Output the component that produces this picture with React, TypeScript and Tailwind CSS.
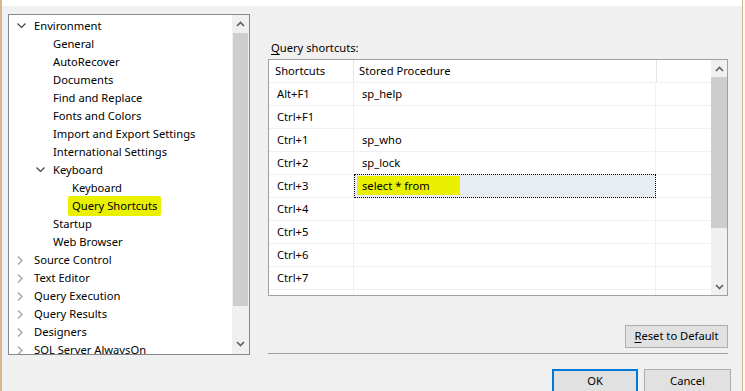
import React from "react"

const font = { fontFamily: '"Noto Sans", "Segoe UI", sans-serif' }

type Node = { label: string; level: number; chevron?: "open" | "closed"; mark?: boolean }

const tree: Node[] = [
  { label: "Environment", level: 0, chevron: "open" },
  { label: "General", level: 1 },
  { label: "AutoRecover", level: 1 },
  { label: "Documents", level: 1 },
  { label: "Find and Replace", level: 1 },
  { label: "Fonts and Colors", level: 1 },
  { label: "Import and Export Settings", level: 1 },
  { label: "International Settings", level: 1 },
  { label: "Keyboard", level: 1, chevron: "open" },
  { label: "Keyboard", level: 2 },
  { label: "Query Shortcuts", level: 2, mark: true },
  { label: "Startup", level: 1 },
  { label: "Web Browser", level: 1 },
  { label: "Source Control", level: 0, chevron: "closed" },
  { label: "Text Editor", level: 0, chevron: "closed" },
  { label: "Query Execution", level: 0, chevron: "closed" },
  { label: "Query Results", level: 0, chevron: "closed" },
  { label: "Designers", level: 0, chevron: "closed" },
  { label: "SQL Server AlwaysOn", level: 0, chevron: "closed" },
]

const rows: [string, string][] = [
  ["Alt+F1", "sp_help"],
  ["Ctrl+F1", ""],
  ["Ctrl+1", "sp_who"],
  ["Ctrl+2", "sp_lock"],
  ["Ctrl+3", "select * from"],
  ["Ctrl+4", ""],
  ["Ctrl+5", ""],
  ["Ctrl+6", ""],
  ["Ctrl+7", ""],
  ["", ""],
]

function ArrowUp() {
  return (
    <svg width="9" height="6" viewBox="0 0 9 6">
      <polyline points="1,5 4.5,1.5 8,5" fill="none" stroke="#606060" strokeWidth="1.6" />
    </svg>
  )
}

function ArrowDown() {
  return (
    <svg width="9" height="6" viewBox="0 0 9 6">
      <polyline points="1,1 4.5,4.5 8,1" fill="none" stroke="#606060" strokeWidth="1.6" />
    </svg>
  )
}

function Chevron({ kind }: { kind: "open" | "closed" }) {
  if (kind === "open")
    return (
      <svg width="9" height="6" viewBox="0 0 9 6">
        <polyline points="0.5,0.5 4.5,4.5 8.5,0.5" fill="none" stroke="#404040" strokeWidth="1.2" />
      </svg>
    )
  return (
    <svg width="6" height="9" viewBox="0 0 6 9">
      <polyline points="1,0.5 5,4.5 1,8.5" fill="none" stroke="#a6a6a6" strokeWidth="1.4" />
    </svg>
  )
}

function TreeRow({ node }: { node: Node }) {
  const indent = node.level * 19
  return (
    <div className="flex h-[18px] items-center text-[11.2px] text-black" style={{ paddingLeft: indent }}>
      <div className="flex w-[25px] shrink-0 items-center pl-[8px]">
        {node.chevron && <Chevron kind={node.chevron} />}
      </div>
      {node.mark ? (
        <span className="-ml-[4px] rounded-[2px] bg-[#e9f000] px-[4px] leading-[20px]">{node.label}</span>
      ) : (
        <span className="whitespace-nowrap">{node.label}</span>
      )}
    </div>
  )
}

export default function App() {
  return (
    <div className="flex h-[391px] w-[745px] overflow-hidden bg-[#f0f0f0]" style={font}>
      <div className="w-[2px] shrink-0 bg-[#d9b48f]" />
      <div className="flex w-[740px] shrink-0 flex-col">
        <div className="h-[6px] shrink-0 bg-white" />
        <div className="flex pt-[8px] pl-[6px]">
          {/* Tree */}
          <div className="flex h-[341px] w-[242px] shrink-0 border border-[#828790] bg-white">
            <div className="flex-1 overflow-hidden pt-[2px]">
              {tree.map((n, i) => (
                <TreeRow key={i} node={n} />
              ))}
            </div>
            <div className="flex w-[17px] shrink-0 flex-col bg-[#f0f0f0]">
              <div className="flex h-[18px] items-center justify-center">
                <ArrowUp />
              </div>
              <div className="mx-[1px] h-[273px] bg-[#cdcdcd]" />
              <div className="flex flex-1 items-end justify-center pb-[7px]">
                <ArrowDown />
              </div>
            </div>
          </div>

          {/* Right side */}
          <div className="ml-[18px] flex w-[460px] shrink-0 flex-col text-[11.2px]">
            <div className="mt-[25px] h-[18px] pl-[3px] leading-[18px] text-black">
              <span className="underline underline-offset-2">Q</span>uery shortcuts:
            </div>
            <div className="mt-[2px] flex h-[237px] border border-[#a0a0a0] bg-white">
              <div className="flex-1 overflow-hidden">
                <div className="grid h-[23px] grid-cols-[85px_303px] border-b border-[#f0f0f0]">
                  <div className="border-r border-[#e5e5e5] pl-[6px] leading-[22px]">Shortcuts</div>
                  <div className="border-r border-[#e5e5e5] pl-[5px] leading-[22px]">Stored Procedure</div>
                </div>
                {rows.map(([k, v], i) => (
                  <div key={i} className="grid h-[23px] grid-cols-[85px_302px] border-b border-[#f0f0f0]">
                    <div className="border-r border-[#f0f0f0] pl-[8px] leading-[22px]">{k}</div>
                    {k === "Ctrl+3" ? (
                      <div className="relative border-r border-[#f0f0f0] bg-[#e8edf1] leading-[22px]">
                        <div className="absolute -top-px -bottom-px left-0 -right-px border border-dotted border-black" />
                        <span className="ml-[3px] inline-block h-[19px] w-[103px] bg-[#e9f000] pl-[5px] leading-[19px]">
                          {v}
                        </span>
                      </div>
                    ) : (
                      <div className="border-r border-[#f0f0f0] pl-[8px] leading-[22px]">{v}</div>
                    )}
                  </div>
                ))}
              </div>
              <div className="flex w-[16px] shrink-0 flex-col bg-[#f0f0f0]">
                <div className="flex h-[17px] items-center justify-center">
                  <ArrowUp />
                </div>
                <div className="h-[151px] bg-[#cdcdcd]" />
                <div className="flex flex-1 items-end justify-center pb-[5px]">
                  <ArrowDown />
                </div>
              </div>
            </div>
            <div className="mt-[29px] flex justify-end">
              <div className="flex h-[23px] w-[103px] items-center justify-center border border-[#adadad] bg-[#e1e1e1]">
                <span className="underline underline-offset-2">R</span>eset to Default
              </div>
            </div>
            <div className="mt-[5px] h-px bg-[#a0a0a0]" />
            <div className="mr-[-3px] mt-[15px] flex justify-end gap-[6px]">
              <div className="flex h-[24px] w-[86px] items-center justify-center border-2 border-[#0078d7] bg-[#e1e1e1]">
                OK
              </div>
              <div className="flex h-[24px] w-[87px] items-center justify-center border border-[#adadad] bg-[#e1e1e1]">
                Cancel
              </div>
            </div>
          </div>
        </div>
      </div>
      <div className="w-px shrink-0 bg-[#d9b48f]" />
      <div className="flex-1 bg-[#f7f7f7]" />
    </div>
  )
}
